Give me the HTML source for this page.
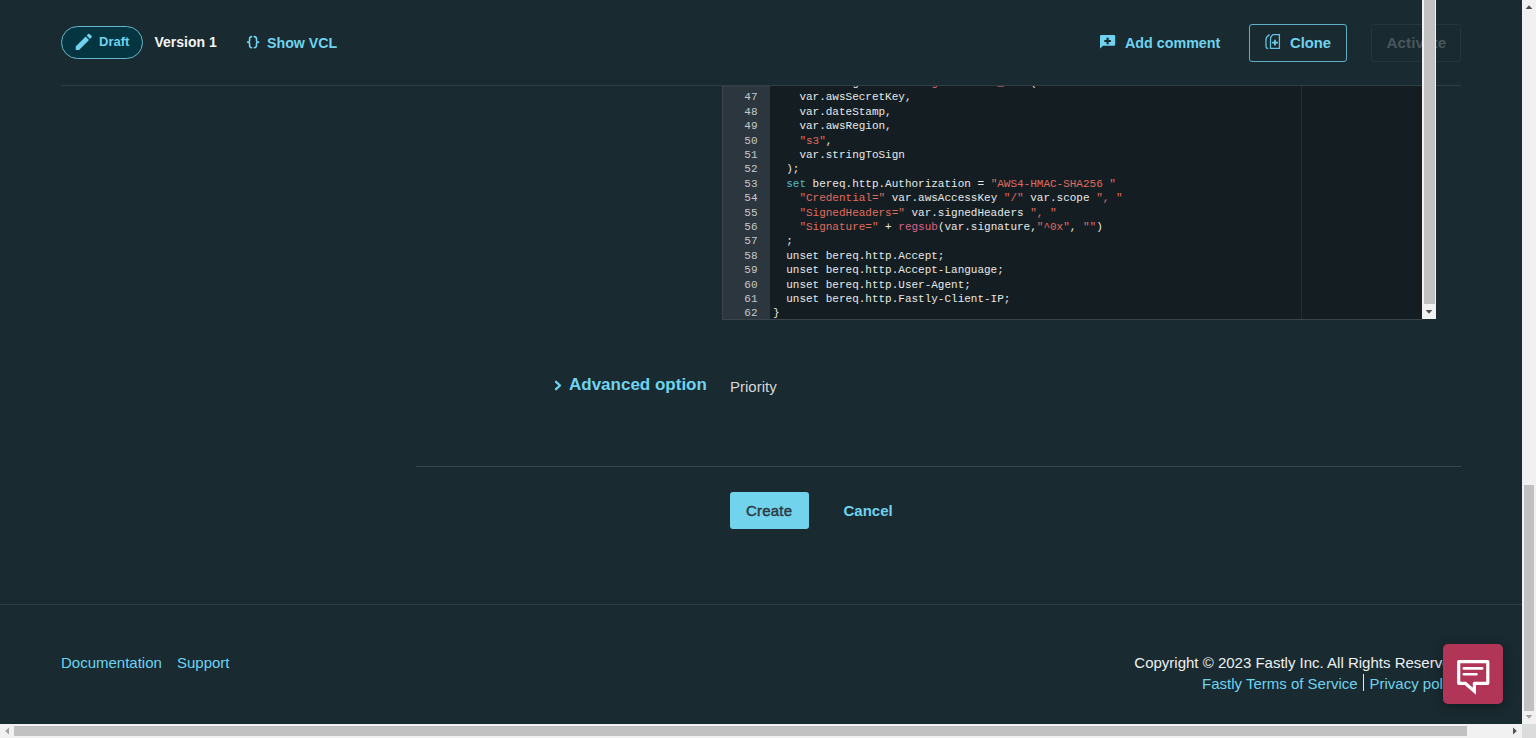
<!DOCTYPE html>
<html><head><meta charset="utf-8">
<style>
html,body{margin:0;padding:0;width:1536px;height:738px;overflow:hidden;background:#192a30;}
body{position:relative;font-family:"Liberation Sans",sans-serif;}
.a{position:absolute;white-space:pre;}
.link{color:#6fd3ef;}
.b{font-weight:700;}
#ed{position:absolute;left:722px;top:0;width:714px;height:319px;background:#141e22;overflow:hidden;}
#gut{position:absolute;left:1px;top:0;width:47px;height:319px;background:#2c363e;}
#edl{position:absolute;left:0;top:0;width:1px;height:319px;background:#3a444c;}
.ln{position:absolute;left:0;width:35.5px;text-align:right;font-family:"Liberation Mono",monospace;font-size:11.7px;color:#c5c9cc;line-height:14.4px;transform:scaleX(0.9402);transform-origin:100% 0;}
.cl{position:absolute;left:51px;font-family:"Liberation Mono",monospace;font-size:11.7px;color:#e8e8e8;line-height:14.4px;white-space:pre;transform:scaleX(0.9402);transform-origin:0 0;}
.s{color:#e06b5f;}
.k{color:#56b9d2;}
.f{color:#d9628a;}
#hdr{position:absolute;left:0;top:0;width:1522px;height:86px;background:#192a30;}
svg{position:absolute;overflow:visible;}
</style></head><body>

<div id="ed">
  <div id="gut"></div><div id="edl"></div><div style="position:absolute;left:0;top:86px;width:48px;height:1px;background:#363f47;"></div>
  <div style="position:absolute;left:579px;top:0;width:1px;height:319px;background:#222c33;"></div>
<div class="ln" style="top:76.00px">46</div><div class="cl" style="top:76.00px">  <span class="k">set</span> var.signature = <span class="f">digest.awsv4_hmac</span>(</div>
<div class="ln" style="top:90.40px">47</div><div class="cl" style="top:90.40px">    var.awsSecretKey,</div>
<div class="ln" style="top:104.80px">48</div><div class="cl" style="top:104.80px">    var.dateStamp,</div>
<div class="ln" style="top:119.20px">49</div><div class="cl" style="top:119.20px">    var.awsRegion,</div>
<div class="ln" style="top:133.60px">50</div><div class="cl" style="top:133.60px">    <span class="s">"s3"</span>,</div>
<div class="ln" style="top:148.00px">51</div><div class="cl" style="top:148.00px">    var.stringToSign</div>
<div class="ln" style="top:162.40px">52</div><div class="cl" style="top:162.40px">  );</div>
<div class="ln" style="top:176.80px">53</div><div class="cl" style="top:176.80px">  <span class="k">set</span> bereq.http.Authorization = <span class="s">"AWS4-HMAC-SHA256 "</span></div>
<div class="ln" style="top:191.20px">54</div><div class="cl" style="top:191.20px">    <span class="s">"Credential="</span> var.awsAccessKey <span class="s">"/"</span> var.scope <span class="s">", "</span></div>
<div class="ln" style="top:205.60px">55</div><div class="cl" style="top:205.60px">    <span class="s">"SignedHeaders="</span> var.signedHeaders <span class="s">", "</span></div>
<div class="ln" style="top:220.00px">56</div><div class="cl" style="top:220.00px">    <span class="s">"Signature="</span> + <span class="f">regsub</span>(var.signature,<span class="s">"^0x"</span>, <span class="s">""</span>)</div>
<div class="ln" style="top:234.40px">57</div><div class="cl" style="top:234.40px">  ;</div>
<div class="ln" style="top:248.80px">58</div><div class="cl" style="top:248.80px">  unset bereq.http.Accept;</div>
<div class="ln" style="top:263.20px">59</div><div class="cl" style="top:263.20px">  unset bereq.http.Accept-Language;</div>
<div class="ln" style="top:277.60px">60</div><div class="cl" style="top:277.60px">  unset bereq.http.User-Agent;</div>
<div class="ln" style="top:292.00px">61</div><div class="cl" style="top:292.00px">  unset bereq.http.Fastly-Client-IP;</div>
<div class="ln" style="top:306.40px">62</div><div class="cl" style="top:306.40px">}</div>

</div>
<div style="position:absolute;left:722px;top:319px;width:700px;height:1px;background:#3a464d;"></div>

<div id="hdr">
  <div style="position:absolute;left:61px;top:85px;width:1400px;height:1px;background:#2f3d44;"></div>
  <!-- Draft pill -->
  <div style="position:absolute;left:61px;top:26px;width:80px;height:31px;border:1px solid #66b8cf;border-radius:17px;background:#043541;"></div>
  <svg style="left:73.3px;top:31.2px" width="21.6" height="21.6" viewBox="0 0 24 24"><path fill="#6fd3ef" d="M3 17.25V21h3.75L17.81 9.94l-3.75-3.75L3 17.25zM20.71 7.04a.996.996 0 0 0 0-1.41l-2.34-2.34a.996.996 0 0 0-1.410 0l-1.83 1.83 3.75 3.75 1.83-1.830z"/></svg>
  <div class="a link b" style="left:99px;top:34px;font-size:13px;line-height:16px;">Draft</div>
  <div class="a b" style="left:154.5px;top:34px;font-size:14px;line-height:17px;color:#f4f4f4;">Version 1</div>
  <svg style="left:0;top:0" width="300" height="60"><g fill="none" stroke="#6fd3ef" stroke-width="1.6" stroke-linecap="round" stroke-linejoin="round" transform="translate(0,0.4)">
    <path d="M251.6 36.2 Q249.6 36.4 249.6 38.4 V40 Q249.6 41.6 247.6 41.7 Q249.6 41.8 249.6 43.4 V45.2 Q249.6 47.2 251.6 47.3"/>
    <path d="M254.3 36.2 Q256.5 36.4 256.5 38.4 V40 Q256.5 41.6 258.6 41.7 Q256.5 41.8 256.5 43.4 V45.2 Q256.5 47.2 254.3 47.3"/>
  </g></svg>
  <div class="a link b" style="left:267px;top:34.5px;font-size:14.2px;line-height:17px;">Show VCL</div>

  <svg style="left:1100px;top:35px" width="16" height="14" viewBox="0 0 16 14">
    <path fill="#6fd3ef" d="M0 1.2 Q0 0 1.2 0 H14 Q15.2 0 15.2 1.2 V9.6 Q15.2 10.8 14 10.8 H3 L0 13.4 Z"/>
    <path fill="#192a30" d="M6.5 2.8 H8.7 V4.9 H10.9 V7.1 H8.7 V9.2 H6.5 V7.1 H4.3 V4.9 H6.5 Z"/>
  </svg>
  <div class="a link b" style="left:1125px;top:34.5px;font-size:14.3px;line-height:17px;">Add comment</div>

  <div style="position:absolute;left:1249px;top:24px;width:96px;height:36px;border:1px solid #5fb0c6;border-radius:3px;"></div>
  <svg style="left:1263px;top:32px" width="20" height="20"><g fill="none" stroke="#62c3dd" stroke-width="1.3">
    <path d="M7.5 16.3 V7 Q7.5 5.2 8.6 4 L10 2.6 H16.4 V16.3 Z"/>
    <path d="M6.6 2.6 Q3 4.6 3 7.5 V14.8 Q3 16.3 5.2 16.5"/>
  </g><g stroke="#6fd3ef" stroke-width="1.7"><path d="M9.1 10.7 H14.9 M12 7.8 V13.6"/></g></svg>
  <div class="a link b" style="left:1290px;top:34.5px;font-size:14.8px;line-height:17px;">Clone</div>
  <div style="position:absolute;left:1371px;top:24px;width:88px;height:36px;border:1px solid #26353d;border-radius:3px;"></div>
  <div class="a b" style="left:1386.5px;top:34px;font-size:15.2px;letter-spacing:0.1px;line-height:17px;color:#4a565d;">Activate</div>
</div>

<!-- editor scrollbar -->
<div style="position:absolute;left:1422px;top:0;width:14px;height:319px;background:#f1f1f1;"></div>
<div style="position:absolute;left:1424px;top:0;width:11px;height:304px;background:#c1c1c1;"></div>
<svg style="left:1422px;top:305px" width="14" height="14"><path fill="#505050" d="M3.6 5 H10.4 L7 8.8 Z"/></svg>

<svg style="left:550px;top:376px" width="16" height="20"><path fill="none" stroke="#6fd3ef" stroke-width="2.3" stroke-linecap="round" stroke-linejoin="round" d="M556 381.8 L560 385.5 L556 389.2" transform="translate(-550,-376)"/></svg>
<div class="a link b" style="left:569px;top:375px;font-size:17px;line-height:20px;">Advanced option</div>
<div class="a" style="left:730px;top:377.5px;font-size:15px;line-height:17px;color:#d4d7d9;">Priority</div>

<div style="position:absolute;left:416px;top:466px;width:1045px;height:1px;background:#3a454d;"></div>
<div style="position:absolute;left:730px;top:492px;width:79px;height:37px;background:#72d3ec;border-radius:3px;"></div>
<div class="a" style="left:746px;top:502px;font-size:15px;line-height:17px;color:#2d3a43;-webkit-text-stroke:0.45px #2d3a43;letter-spacing:0.2px;">Create</div>
<div class="a link b" style="left:843.5px;top:502px;font-size:15px;line-height:17px;">Cancel</div>

<div style="position:absolute;left:0;top:604px;width:1522px;height:1px;background:#2f3d45;"></div>
<div class="a link" style="left:61px;top:654px;font-size:15px;line-height:17px;">Documentation</div>
<div class="a link" style="left:177px;top:654px;font-size:15px;line-height:17px;">Support</div>

<div class="a" style="right:73px;top:654px;font-size:15px;line-height:17px;color:#eef0f1;text-align:right;">Copyright © 2023 Fastly Inc. All Rights Reserved.</div>
<div class="a link" style="left:1202px;top:675px;font-size:15px;line-height:17px;">Fastly Terms of Service</div>
<div style="position:absolute;left:1363px;top:674px;width:1.3px;height:17px;background:#e6e8e9;"></div>
<div class="a link" style="left:1369.5px;top:675px;font-size:15px;line-height:17px;">Privacy policy</div>

<!-- chat button -->
<div style="position:absolute;left:1442.5px;top:644.2px;width:60px;height:60px;border-radius:5px;background:#b03556;box-shadow:0 2px 12px rgba(0,0,0,0.35);"></div>
<svg style="left:1442px;top:644px" width="60" height="60"><g fill="none" stroke="#fff" stroke-width="3.2"><path stroke-linejoin="round" stroke-linecap="round" d="M32.4 39.3 H45.8 V17.6 H16.7 V39.3 H23"/><path stroke-linejoin="miter" stroke-miterlimit="10" d="M22.6 38.7 L32.4 47.2 V39.3"/></g>
  <g stroke="#fff" stroke-width="2.6" stroke-linecap="round"><path d="M21.8 24.4 H40.2 M21.8 30.2 H34.5"/></g></svg>

<!-- page scrollbars -->
<div style="position:absolute;left:1522px;top:0;width:14px;height:724px;background:#f1f1f1;"></div>
<div style="position:absolute;left:1524px;top:485px;width:10px;height:226px;background:#c1c1c1;"></div>
<svg style="left:1522px;top:0" width="14" height="14"><path fill="#505050" d="M3.6 9 H10.4 L7 5.2 Z"/></svg>
<svg style="left:1522px;top:710px" width="14" height="14"><path fill="#a3a3a3" d="M3.6 5 H10.4 L7 8.8 Z"/></svg>
<div style="position:absolute;left:0;top:724px;width:1522px;height:14px;background:#f1f1f1;"></div>
<div style="position:absolute;left:14px;top:726px;width:1453px;height:10px;background:#c1c1c1;"></div>
<svg style="left:0;top:724px" width="14" height="14"><path fill="#a3a3a3" d="M9 3.6 V10.4 L5.2 7 Z"/></svg>
<svg style="left:1508px;top:724px" width="14" height="14"><path fill="#505050" d="M5 3.6 V10.4 L8.8 7 Z"/></svg>
<div style="position:absolute;left:1522px;top:724px;width:14px;height:14px;background:#dcdcdc;"></div>

</body></html>
